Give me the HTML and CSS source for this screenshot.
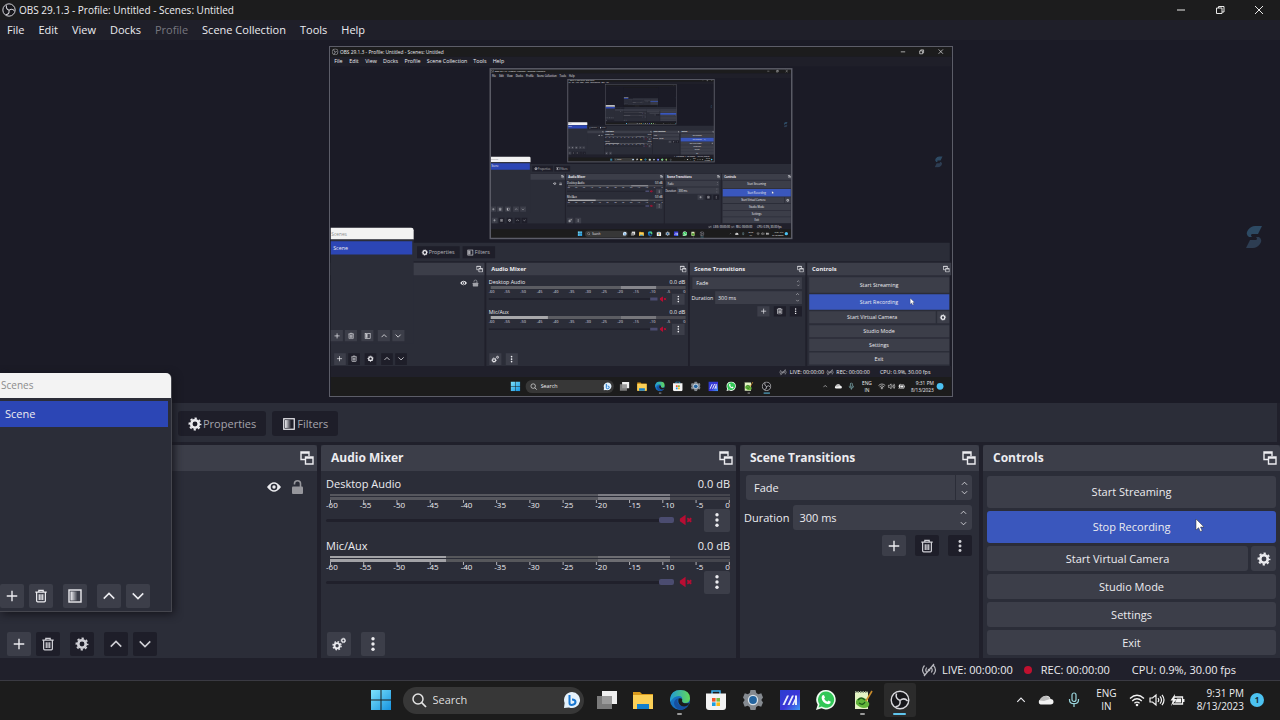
FILE: index.html
```html
<!DOCTYPE html>
<html lang="en">

<head>
    <meta charset="UTF-8">
    <meta name="viewport" content="width=device-width, initial-scale=1.0">
    <title>OBS 29.1.3 - Profile: Untitled - Scenes: Untitled</title>
    <link rel="stylesheet" href="styles.css">
</head>

<body>
    <!-- icons -->
    <svg class="sprite" aria-hidden="true">
        <defs>
            <linearGradient id="winBlue" x1="0" y1="0" x2="1" y2="1">
                <stop offset="0" stop-color="#7fe3fb" />
                <stop offset="1" stop-color="#1592e0" />
            </linearGradient>
            <linearGradient id="edgeGreen" x1="0" y1="0" x2="1" y2="0">
                <stop offset="0" stop-color="#1f9ad8" />
                <stop offset="1" stop-color="#63d958" />
            </linearGradient>
            <linearGradient id="asus" x1="0" y1="0" x2="1" y2="1">
                <stop offset="0" stop-color="#2a3fd0" />
                <stop offset=".55" stop-color="#3c35d8" />
                <stop offset="1" stop-color="#3d9af5" />
            </linearGradient>
            <linearGradient id="fade" x1="0" y1="0" x2="1" y2="0">
                <stop offset="0" stop-color="#f4f4f8" />
                <stop offset="1" stop-color="#f4f4f8" stop-opacity="0" />
            </linearGradient>
        </defs>
        <symbol id="plus" viewBox="0 0 16 16">
            <path d="M8 2v12M2 8h12" fill="none" stroke="currentColor" stroke-width="1.6" />
        </symbol>
        <symbol id="trash" viewBox="0 0 16 16">
            <path d="M1.5 3.5h13M5.5 3V1.500h5V3M3 4v9.500q0 1.200 1.200 1.200h7.600q1.200 0 1.200-1.200V4M6 6v6.500M8 6v6.500M10 6v6.500" fill="none" stroke="currentColor" stroke-width="1.4" />
        </symbol>
        <symbol id="gear" viewBox="0 0 16 16">
            <circle cx="8" cy="8" r="4.3" fill="none" stroke="currentColor" stroke-width="3" />
            <circle cx="8" cy="8" r="6.4" fill="none" stroke="currentColor" stroke-width="2" stroke-dasharray="2.6 2.43" stroke-dashoffset="1.3" />
        </symbol>
        <symbol id="cogs" viewBox="0 0 16 16">
            <circle cx="5.8" cy="10" r="3" fill="none" stroke="currentColor" stroke-width="2.2" />
            <circle cx="5.8" cy="10" r="4.6" fill="none" stroke="currentColor" stroke-width="1.6" stroke-dasharray="1.8 1.81" />
            <circle cx="13" cy="4" r="1.9" fill="none" stroke="currentColor" stroke-width="1.5" />
            <circle cx="13" cy="4" r="2.7" fill="none" stroke="currentColor" stroke-width=".8" stroke-dasharray="1.2 .92" />
        </symbol>
        <symbol id="filter" viewBox="0 0 16 16">
            <rect x="2" y="2" width="12" height="12" fill="none" stroke="currentColor" stroke-width="1.4" />
            <rect x="3.5" y="3.5" width="7" height="9" fill="url(#fade)" />
        </symbol>
        <symbol id="up" viewBox="0 0 16 16">
            <path d="M2 11l6-6 6 6" fill="none" stroke="currentColor" stroke-width="1.8" />
        </symbol>
        <symbol id="down" viewBox="0 0 16 16">
            <path d="M2 5l6 6 6-6" fill="none" stroke="currentColor" stroke-width="1.8" />
        </symbol>
        <symbol id="dots" viewBox="0 0 16 16">
            <g fill="currentColor">
                <circle cx="8" cy="2.8" r="1.7" />
                <circle cx="8" cy="8" r="1.7" />
                <circle cx="8" cy="13.2" r="1.7" />
            </g>
        </symbol>
        <symbol id="popout" viewBox="0 0 14 14">
            <path d="M5 8.5H1V1h8v4M1 2h8" fill="none" stroke="currentColor" stroke-width="1.4" />
            <path d="M5.5 6h7.5v7H5.5zM5.5 7h7.5" fill="none" stroke="currentColor" stroke-width="1.4" />
        </symbol>
        <symbol id="eye" viewBox="0 0 16 16">
            <path d="M1 8q7-9.5 14 0q-7 9.5-14 0z" fill="currentColor" />
            <circle cx="8" cy="8" r="3.3" fill="#2b2d38" />
            <circle cx="8" cy="8" r="1.7" fill="currentColor" />
        </symbol>
        <symbol id="lock" viewBox="0 0 16 16">
            <rect x="3" y="7.5" width="11" height="7.5" rx="1" fill="currentColor" />
            <path d="M5.500 5.500v-1q0-2.800 3-2.800t3 2.800V8" fill="none" stroke="currentColor" stroke-width="1.6" />
        </symbol>
        <symbol id="mute" viewBox="0 0 16 12">
            <path d="M1 4.500L7.500 0v12L1 7.500z" fill="#b80d33" />
            <path d="M9.500 4l4.500 4M14 4L9.500 8" stroke="#b80d33" stroke-width="2" />
        </symbol>
        <symbol id="obs" viewBox="0 0 20 20">
            <circle cx="10" cy="10" r="8.8" fill="#17171b" stroke="#d8d8dc" stroke-width="1.4" />
            <g fill="none" stroke="#d8d8dc" stroke-width="1.5">
                <path d="M10 10.500Q5 8.500 6.500 3.500" />
                <path d="M10 10.500Q14.200 7 17.600 11" />
                <path d="M10 10.500Q11 16 5.500 16.800" />
            </g>
        </symbol>
        <symbol id="win" viewBox="0 0 20 20">
            <path d="M0 0h9.500v9.500H0zM10.500 0H20v9.500h-9.500zM0 10.500h9.500V20H0zM10.500 10.500H20V20h-9.500z" fill="url(#winBlue)" />
        </symbol>
        <symbol id="glass" viewBox="0 0 16 16">
            <circle cx="7" cy="7" r="5" fill="none" stroke="#e4e4e4" stroke-width="1.5" />
            <path d="M10.700 10.700L15 15" stroke="#e4e4e4" stroke-width="1.7" />
        </symbol>
        <symbol id="bing" viewBox="0 0 18 18">
            <path d="M9 1a8 8 0 1 1-3 15.400L1 17l.6-5A8 8 0 0 1 9 1z" fill="#e5f2fc" />
            <path d="M6.500 4v8q0 2 2.200 2q3.800-.4 3.800-3t-3.500-2.600" fill="none" stroke="#1877d2" stroke-width="2" />
        </symbol>
        <symbol id="taskview" viewBox="0 0 20 20">
            <path d="M5 1h15v13H5z" fill="#efefef" />
            <path d="M0 6h15v13H0z" fill="#8b8b8b" opacity=".85" />
        </symbol>
        <symbol id="folder" viewBox="0 0 20 20">
            <path d="M0 2h7l2 2h11v15H0z" fill="#d99a1c" />
            <path d="M0 5h20v14H0z" fill="#fbd057" />
            <path d="M4 14h12v5H4z" fill="#1380ce" />
        </symbol>
        <symbol id="edge" viewBox="0 0 20 20">
            <circle cx="10" cy="10" r="10" fill="#1673c3" />
            <path d="M0 9Q1 0 10.500 0T20 8.500Q19.500 13 15 13t-3-3Q13 6 8.500 6T0 12z" fill="url(#edgeGreen)" />
            <path d="M8 8.500q-2 6 3.500 7.500q4 1 7-1.500q-3 5.500-8.500 5.500Q4 18 4 13q.5-4 4-4.500z" fill="#1650a0" />
            <path d="M8.500 8.500q3-1 3.800 1q-1 3 2.200 3.700q3 .5 4.500-.7l-.5 2.500q-4 2.500-7.500.7T8.500 8.500z" fill="#1c1c1c" />
        </symbol>
        <symbol id="store" viewBox="0 0 20 20">
            <path d="M6 4V1h8v3" fill="none" stroke="#3ab0ee" stroke-width="1.5" />
            <path d="M0 3.500h20V17q0 3-3 3H3q-3 0-3-3z" fill="#f3f3f3" />
            <path d="M6 8h3.600v3.600H6z" fill="#f05325" />
            <path d="M10.400 8H14v3.600h-3.600z" fill="#7ab93e" />
            <path d="M6 12.400h3.600V16H6z" fill="#1d9de0" />
            <path d="M10.400 12.400H14V16h-3.600z" fill="#fcb913" />
        </symbol>
        <symbol id="settings" viewBox="0 0 20 20">
            <path d="M7.500 0h5l.8 3 2 1.200 3-.9L20 7.500 18.300 10l1.700 2.500-1.800 4.200-3-.9-2 1.200-.7 3h-5l-.8-3-2-1.200-3 .9L0 12.500 1.700 10 0 7.500l1.800-4.200 3 .9 2-1.200z" fill="#858a90" />
            <circle cx="10" cy="10" r="5.2" fill="#d9e2ea" />
            <circle cx="10" cy="10" r="3.9" fill="#23649f" />
        </symbol>
        <symbol id="myasus" viewBox="0 0 20 20">
            <path d="M0 0h20v20H0z" fill="url(#asus)" />
            <path d="M2.500 15L7 5.500h2L4.500 15zM7.500 15L12 5.500h2L9.500 15zM12 15l3-6.500V5.500h2V15h-2v-3l-1.200 3z" fill="#e9eefc" />
        </symbol>
        <symbol id="whatsapp" viewBox="0 0 20 20">
            <path d="M10.200 0a9.700 9.700 0 1 1-4.700 18.300L0 20l1.700-5.200A9.700 9.700 0 0 1 10.200 0z" fill="#eefbf0" />
            <path d="M10.200 1.600a8.100 8.100 0 1 1-4.400 15L2.500 17.500l1-3.200A8.100 8.100 0 0 1 10.200 1.600z" fill="#32c757" />
            <path d="M6.300 5.500q1.300-1.200 2 .3l.7 1.700-.9 1.300q1 2 3.200 2.900l1.200-1.200 2.300 1.200q0 2.300-2.600 2.600Q6 13 5.600 8q0-1.500.7-2.500z" fill="#fff" />
        </symbol>
        <symbol id="notepad" viewBox="0 0 20 20">
            <path d="M2 2h13v17H2z" fill="#e4f3c4" />
            <path d="M2 2h13" stroke="#8d9a80" stroke-width="2" stroke-dasharray="1.5 1" />
            <path d="M3 14q-1-6 5-6t6 3q4 2 1 6-6 3-12-3z" fill="#62b53a" />
            <path d="M5 10q3-4 7 0M6 13q4 3 6-1" fill="none" stroke="#1e5b1b" stroke-width="1.3" />
            <path d="M19 1l-6 10" stroke="#c98b2b" stroke-width="1.6" />
        </symbol>
        <symbol id="cloud" viewBox="0 0 16 12">
            <path d="M4 10.500q-3.200 0-3.200-2.600T3.500 5.300Q5 1.500 8.500 1.800T12.500 5q3 .2 3 2.800t-3 2.700z" fill="#f2f2f2" />
            <path d="M1.500 6.500Q3.300 1.500 8 2q3 .5 4 3L6 7z" fill="#bdbdbd" />
        </symbol>
        <symbol id="mic" viewBox="0 0 12 16">
            <rect x="4" y="1" width="4" height="8.5" rx="2" fill="none" stroke="#9ad5dc" stroke-width="1.2" />
            <path d="M1.500 7v1q0 3.700 4.500 3.700T10.500 8V7M6 11.700V15" fill="none" stroke="#9ad5dc" stroke-width="1.2" />
        </symbol>
        <symbol id="wifi" viewBox="0 0 16 14">
            <path d="M1 5.500q7-6.500 14 0M3.200 8q4.800-4.400 9.600 0M5.400 10.300q2.600-2.300 5.200 0" fill="none" stroke="#f2f2f2" stroke-width="1.3" />
            <circle cx="8" cy="12" r="1.3" fill="#f2f2f2" />
        </symbol>
        <symbol id="volume" viewBox="0 0 16 14">
            <path d="M1 5h2.500L7 2v10L3.500 9H1zM9 5q1.500 2 0 4M11 3.300q3 3.700 0 7.400M13 1.800q4 5.200 0 10.400" fill="none" stroke="#f2f2f2" stroke-width="1.2" />
        </symbol>
        <symbol id="battery" viewBox="0 0 16 14">
            <path d="M5 4h8.500v7H4M14.800 6v3" fill="none" stroke="#f2f2f2" stroke-width="1.3" />
            <path d="M8 5.500h4v4H6z" fill="#f2f2f2" />
            <path d="M6 1L1.500 7.500h2.300L2 13l6-7H5.500z" fill="#f2f2f2" />
        </symbol>
        <symbol id="live" viewBox="0 0 16 14">
            <path d="M3.500 2.500q-4 4.500 0 9M5.800 4.500q-2 2.500 0 5M12.500 2.500q4 4.500 0 9M10.200 4.500q2 2.500 0 5M3 13L13 1" fill="none" stroke="#b9b9bf" stroke-width="1.2" />
            <circle cx="8" cy="7" r="1.3" fill="#b9b9bf" />
        </symbol>
        <symbol id="swirl" viewBox="0 0 20 24">
            <path d="M18 1l-4 8H8q-2 1 0 3H5Q1 9 4 5q3-4 7-4z" fill="#2d4a63" />
            <path d="M2 23l4-8h6q2-1 0-3h3q4 3 1 7-3 4-7 4z" fill="#2d3d52" />
        </symbol>
        <symbol id="cursor" viewBox="0 0 10 14">
            <path d="M1 1v11l2.600-2.300L5.300 13.500l1.900-.8-1.700-3.700H9z" fill="#fff" stroke="#333" stroke-width=".5" />
        </symbol>
    </svg>

    <header class="titlebar">
        <svg class="icon-14"><use href="#obs" /></svg>
        <span class="title">OBS 29.1.3 - Profile: Untitled - Scenes: Untitled</span>
        <div class="window-buttons">
            <button type="button" aria-label="Minimize"><svg viewBox="0 0 10 10"><path d="M1 5h8" /></svg></button>
            <button type="button" aria-label="Restore"><svg viewBox="0 0 10 10"><path d="M1.500 3h5.500v5.500H1.500zM3.500 3V1.500h5.500V7H7" /></svg></button>
            <button type="button" aria-label="Close"><svg viewBox="0 0 10 10"><path d="M1 1l8 8M9 1L1 9" /></svg></button>
        </div>
    </header>

    <nav class="menubar">
        <button type="button">File</button>
        <button type="button">Edit</button>
        <button type="button">View</button>
        <button type="button">Docks</button>
        <button type="button" disabled>Profile</button>
        <button type="button">Scene Collection</button>
        <button type="button">Tools</button>
        <button type="button">Help</button>
    </nav>

    <main class="canvas">
        <svg class="preview" viewBox="0 0 1280 720">
            <!-- the captured desktop, repeated inside itself below -->
            <g id="desktop">
                <path d="M0 0h1280v720H0z" fill="#1b1b26" />
                <path d="M0 0h1280v20H0z" fill="#1c1c1d" />
                <path d="M0 20h1280v20H0z" fill="#1f1f29" />
                <use href="#obs" x="2" y="3" width="14" height="14" />
                <g class="cap-text">
                    <text x="19" y="14" class="cap-small">OBS 29.1.3 - Profile: Untitled - Scenes: Untitled</text>
                    <text x="7" y="34">File</text>
                    <text x="38" y="34">Edit</text>
                    <text x="71" y="34">View</text>
                    <text x="108" y="34">Docks</text>
                    <text x="152" y="34">Profile</text>
                    <text x="198" y="34">Scene Collection</text>
                    <text x="294" y="34">Tools</text>
                    <text x="334" y="34">Help</text>
                </g>
                <path d="M1176 10h9M1215 8h6v6h-6zM1217 8v-2h6v6h-2M1254 5l9 9M1263 5l-9 9" fill="none" stroke="#ddd" stroke-width="1.5" />
                <use href="#swirl" x="1244" y="225" width="20" height="24" />
                <path d="M0 404h1277v254H0z" fill="#2b2d38" />
                <path d="M0 442h1280v3H0zM317 445h4v213h-4zM737 445h4v213h-4zM979 445h4v213h-4z" fill="#20202b" />
                <path d="M0 658h1280v23H0z" fill="#20202b" />
                <path d="M0 681h1280v39H0z" fill="#1c1c1c" />
                <path d="M0 445h317v26H0zM321 445h416v26H321zM741 445h238v26H741zM983 445h297v26H983z" fill="#3c3e49" />
                <path d="M178 411h88v25h-88zM272 411h67v25h-67z" fill="#1e1e29" />
                <g color="#f0f0f4">
                    <use href="#gear" x="187" y="417" width="14" height="14" />
                    <use href="#filter" x="281" y="417" width="14" height="14" />
                    <use href="#popout" x="300" y="451" width="14" height="14" />
                    <use href="#popout" x="720" y="451" width="14" height="14" />
                    <use href="#popout" x="962" y="451" width="14" height="14" />
                    <use href="#popout" x="1263" y="451" width="14" height="14" />
                    <use href="#eye" x="266" y="479" width="16" height="16" />
                    <use href="#lock" x="290" y="479" width="16" height="16" opacity=".6" />
                </g>
                <path d="M987 475h289v32H987zM987 545h261v25H987zM1251 545h25v25h-25zM987 574h289v25H987zM987 602h289v25H987zM987 630h289v25H987zM746 475h226v24H746zM793 504h179v26H793zM880 535h25v21h-25zM704 509h26v23h-26zM704 571h26v23h-26zM327 632h25v24h-25zM361 632h25v24h-25zM7 632h24v24H7z" fill="#3c3e49" />
                <path d="M987 510h289v32H987z" fill="#3a57bd" />
                <path d="M914 535h25v21h-25zM947 535h25v21h-25zM36 632h24v24H36zM70 632h24v24H70zM104 632h24v24h-24zM133 632h24v24h-24z" fill="#1e1e29" />
                <g class="cap-text">
                    <text x="202" y="428" opacity=".7">Properties</text>
                    <text x="297" y="428" opacity=".7">Filters</text>
                    <text x="331" y="463" class="cap-bold">Audio Mixer</text>
                    <text x="750" y="463" class="cap-bold">Scene Transitions</text>
                    <text x="993" y="463" class="cap-bold">Controls</text>
                    <text x="326" y="488">Desktop Audio</text>
                    <text x="699" y="488">0.0 dB</text>
                    <text x="326" y="550">Mic/Aux</text>
                    <text x="699" y="550">0.0 dB</text>
                    <text x="754" y="492">Fade</text>
                    <text x="744" y="522">Duration</text>
                    <text x="799" y="521">300 ms</text>
                    <text x="947" y="675">LIVE: 00:00:00</text>
                    <text x="1043" y="675">REC: 00:00:00</text>
                    <text x="1133" y="675">CPU: 0.9%, 30.00 fps</text>
                </g>
                <g class="cap-text cap-mid">
                    <text x="1131" y="495">Start Streaming</text>
                    <text x="1131" y="530">Start Recording</text>
                    <text x="1117" y="562">Start Virtual Camera</text>
                    <text x="1131" y="590">Studio Mode</text>
                    <text x="1131" y="619">Settings</text>
                    <text x="1131" y="647">Exit</text>
                </g>
                <path d="M330 493h268v6H330zM448 555h150v6H448z" fill="#5b5c62" />
                <path d="M598 493h74v6h-74z" fill="#86868c" />
                <path d="M598 555h74v6h-74z" fill="#77777c" />
                <path d="M330 555h118v6H330z" fill="#a8a8ab" />
                <path d="M672 493h60v6h-60zM672 555h60v6h-60z" fill="#48484f" />
                <g class="cap-scale">
                    <text x="326" y="508">-60</text><text x="358" y="508">-55</text><text x="391" y="508">-50</text><text x="425" y="508">-45</text><text x="458" y="508">-40</text><text x="491" y="508">-35</text><text x="525" y="508">-30</text><text x="558" y="508">-25</text><text x="591" y="508">-20</text><text x="624" y="508">-15</text><text x="658" y="508">-10</text><text x="693" y="508">-5</text><text x="727" y="508">0</text>
                    <text x="326" y="570">-60</text><text x="358" y="570">-55</text><text x="391" y="570">-50</text><text x="425" y="570">-45</text><text x="458" y="570">-40</text><text x="491" y="570">-35</text><text x="525" y="570">-30</text><text x="558" y="570">-25</text><text x="591" y="570">-20</text><text x="624" y="570">-15</text><text x="658" y="570">-10</text><text x="693" y="570">-5</text><text x="727" y="570">0</text>
                </g>
                <path d="M326 520h333M326 582h333" stroke="#1e1e29" stroke-width="3" />
                <path d="M659 517h15v6h-15zM659 579h15v6h-15z" fill="#4b4c70" />
                <use href="#mute" x="678" y="514" width="16" height="12" />
                <use href="#mute" x="678" y="576" width="16" height="12" />
                <g color="#f0f0f4">
                    <use href="#dots" x="709" y="512" width="16" height="16" />
                    <use href="#dots" x="709" y="574" width="16" height="16" />
                    <use href="#dots" x="365" y="636" width="16" height="16" />
                    <use href="#cogs" x="331" y="636" width="16" height="16" />
                    <use href="#plus" x="886" y="538" width="14" height="14" />
                    <use href="#trash" x="919" y="538" width="14" height="14" />
                    <use href="#dots" x="952" y="538" width="14" height="14" />
                    <use href="#up" x="959" y="506" width="8" height="8" />
                    <use href="#down" x="959" y="519" width="8" height="8" />
                    <use href="#up" x="961" y="480" width="7" height="7" />
                    <use href="#down" x="961" y="488" width="7" height="7" />
                    <use href="#gear" x="1256" y="551" width="14" height="14" />
                    <use href="#plus" x="11" y="636" width="14" height="14" />
                    <use href="#trash" x="41" y="636" width="14" height="14" />
                    <use href="#gear" x="75" y="636" width="14" height="14" />
                    <use href="#up" x="109" y="636" width="14" height="14" />
                    <use href="#down" x="138" y="636" width="14" height="14" />
                </g>
                <use href="#cursor" x="1194" y="517" width="12" height="16" />
                <use href="#live" x="925" y="664" width="16" height="14" />
                <use href="#live" x="1022" y="664" width="16" height="14" />
                <path d="M0 373h166q5 0 5 5v19H0z" fill="#f3f3f3" />
                <path d="M0 397h171v215H0z" fill="#2b2d38" />
                <path d="M0 401h168v27H0z" fill="#2c46b5" />
                <path d="M0 584h25v23H0zM29 584h25v23H29zM63 584h25v23H63zM97 584h25v23H97zM127 584h25v23h-25z" fill="#3c3e49" />
                <g class="cap-text">
                    <text x="1" y="389" opacity=".5" class="cap-small cap-dark">Scenes</text>
                    <text x="5" y="418">Scene</text>
                </g>
                <g color="#f0f0f4">
                    <use href="#plus" x="6" y="589" width="14" height="14" />
                    <use href="#trash" x="35" y="589" width="14" height="14" />
                    <use href="#filter" x="69" y="589" width="14" height="14" />
                    <use href="#up" x="103" y="589" width="14" height="14" />
                    <use href="#down" x="132" y="589" width="14" height="14" />
                </g>
                <rect x="402" y="687" width="182" height="27" rx="13" fill="#373737" />
                <use href="#win" x="371" y="690" width="20" height="20" />
                <use href="#glass" x="411" y="693" width="15" height="15" />
                <use href="#bing" x="562" y="691" width="18" height="18" />
                <use href="#taskview" x="596" y="690" width="20" height="20" />
                <use href="#folder" x="632" y="690" width="20" height="20" />
                <use href="#edge" x="669" y="690" width="20" height="20" />
                <use href="#store" x="706" y="690" width="20" height="20" />
                <use href="#settings" x="743" y="690" width="20" height="20" />
                <use href="#myasus" x="779" y="690" width="20" height="20" />
                <use href="#whatsapp" x="816" y="690" width="20" height="20" />
                <use href="#notepad" x="852" y="690" width="20" height="20" />
                <use href="#obs" x="889" y="690" width="20" height="20" />
                <path d="M677 714h5M860 714h5" stroke="#999" stroke-width="2" />
                <path d="M893 714h13" stroke="#60c6ee" stroke-width="2" />
                <g color="#f0f0f4"><use href="#up" x="1015" y="695" width="10" height="10" /></g>
                <use href="#cloud" x="1039" y="694" width="16" height="12" />
                <use href="#mic" x="1068" y="692" width="12" height="16" />
                <use href="#wifi" x="1129" y="693" width="16" height="14" />
                <use href="#volume" x="1149" y="693" width="16" height="14" />
                <use href="#battery" x="1169" y="693" width="16" height="14" />
                <circle cx="1257" cy="700" r="7" fill="#4cc2f1" />
                <g class="cap-text">
                    <text x="433" y="704">Search</text>
                    <g class="cap-small">
                        <text x="1096" y="697">ENG</text>
                        <text x="1101" y="711">IN</text>
                        <text x="1207" y="697">9:31 PM</text>
                        <text x="1197" y="711">8/13/2023</text>
                    </g>
                </g>
            </g>
            <svg x="329" y="45" width="622" height="350" viewBox="0 0 1280 720">
                <use href="#desktop" />
                <svg x="329" y="45" width="622" height="350" viewBox="0 0 1280 720">
                    <use href="#desktop" />
                    <svg x="329" y="45" width="622" height="350" viewBox="0 0 1280 720">
                        <use href="#desktop" />
                        <svg x="329" y="45" width="622" height="350" viewBox="0 0 1280 720">
                            <use href="#desktop" />
                        </svg>
                    </svg>
                    <rect class="edge" x="329" y="45" width="622" height="350" stroke-width="4" />
                </svg>
                <rect class="edge" x="329" y="45" width="622" height="350" stroke-width="4" />
            </svg>
            <rect class="edge" x="329" y="45" width="622" height="350" stroke-width="3" />
        </svg>
        <svg class="swirl"><use href="#swirl" /></svg>
    </main>

    <div class="source-bar">
        <button type="button" class="dark"><svg class="icon-14"><use href="#gear" /></svg>Properties</button>
        <button type="button" class="dark"><svg class="icon-14"><use href="#filter" /></svg>Filters</button>
    </div>

    <div class="docks">
        <section class="dock">
            <h2><span></span><svg class="icon-14"><use href="#popout" /></svg></h2>
            <div class="source-row">
                <button type="button" aria-label="Visible"><svg class="icon-16"><use href="#eye" /></svg></button>
                <button type="button" aria-label="Lock" class="faded"><svg class="icon-16"><use href="#lock" /></svg></button>
            </div>
            <div class="tools source-tools">
                <button type="button" aria-label="Add source"><svg class="icon-14"><use href="#plus" /></svg></button>
                <button type="button" class="dark" aria-label="Remove source"><svg class="icon-14"><use href="#trash" /></svg></button>
                <button type="button" class="dark split" aria-label="Source properties"><svg class="icon-14"><use href="#gear" /></svg></button>
                <button type="button" class="dark split" aria-label="Move up"><svg class="icon-14"><use href="#up" /></svg></button>
                <button type="button" class="dark" aria-label="Move down"><svg class="icon-14"><use href="#down" /></svg></button>
            </div>
        </section>

        <section class="dock">
            <h2><span>Audio Mixer</span><svg class="icon-14"><use href="#popout" /></svg></h2>
            <div class="mixer">
                <div class="channel">
                    <div class="channel-name"><label for="desktop-vol">Desktop Audio</label><span>0.0 dB</span></div>
                    <div class="meter meter-desktop"></div>
                    <div class="scale"><span>-60</span><span>-55</span><span>-50</span><span>-45</span><span>-40</span><span>-35</span><span>-30</span><span>-25</span><span>-20</span><span>-15</span><span>-10</span><span>-5</span><span>0</span></div>
                    <div class="channel-row">
                        <input type="range" id="desktop-vol" min="0" max="100" value="100">
                        <button type="button" class="mute" aria-label="Mute"><svg><use href="#mute" /></svg></button>
                        <button type="button" aria-label="Desktop Audio options"><svg class="icon-16"><use href="#dots" /></svg></button>
                    </div>
                </div>
                <div class="channel">
                    <div class="channel-name"><label for="mic-vol">Mic/Aux</label><span>0.0 dB</span></div>
                    <div class="meter meter-mic"></div>
                    <div class="scale"><span>-60</span><span>-55</span><span>-50</span><span>-45</span><span>-40</span><span>-35</span><span>-30</span><span>-25</span><span>-20</span><span>-15</span><span>-10</span><span>-5</span><span>0</span></div>
                    <div class="channel-row">
                        <input type="range" id="mic-vol" min="0" max="100" value="100">
                        <button type="button" class="mute" aria-label="Mute"><svg><use href="#mute" /></svg></button>
                        <button type="button" aria-label="Mic/Aux options"><svg class="icon-16"><use href="#dots" /></svg></button>
                    </div>
                </div>
            </div>
            <div class="tools mixer-tools">
                <button type="button" aria-label="Audio settings"><svg class="icon-14"><use href="#cogs" /></svg></button>
                <button type="button" aria-label="Mixer menu"><svg class="icon-16"><use href="#dots" /></svg></button>
            </div>
        </section>

        <section class="dock">
            <h2><span>Scene Transitions</span><svg class="icon-14"><use href="#popout" /></svg></h2>
            <div class="transitions">
                <div class="field">
                    <select aria-label="Transition">
                        <option>Fade</option>
                    </select>
                    <span class="arrows divided"><svg><use href="#up" /></svg><svg><use href="#down" /></svg></span>
                </div>
                <div class="duration">
                    <label for="duration">Duration</label>
                    <div class="field">
                        <input type="text" id="duration" value="300 ms">
                        <span class="arrows wide"><svg><use href="#up" /></svg><svg><use href="#down" /></svg></span>
                    </div>
                </div>
                <div class="tools transition-tools">
                    <button type="button" aria-label="Add transition"><svg class="icon-14"><use href="#plus" /></svg></button>
                    <button type="button" class="dark" aria-label="Remove transition"><svg class="icon-14"><use href="#trash" /></svg></button>
                    <button type="button" class="dark" aria-label="Transition menu"><svg class="icon-14"><use href="#dots" /></svg></button>
                </div>
            </div>
        </section>

        <section class="dock">
            <h2><span>Controls</span><svg class="icon-14"><use href="#popout" /></svg></h2>
            <div class="controls">
                <button type="button" class="tall">Start Streaming</button>
                <button type="button" class="tall recording">Stop Recording<svg class="cursor"><use href="#cursor" /></svg></button>
                <div class="camera">
                    <button type="button">Start Virtual Camera</button>
                    <button type="button" aria-label="Virtual camera settings"><svg class="icon-14"><use href="#gear" /></svg></button>
                </div>
                <button type="button">Studio Mode</button>
                <button type="button">Settings</button>
                <button type="button">Exit</button>
            </div>
        </section>
    </div>

    <div class="statusbar">
        <svg class="live"><use href="#live" /></svg>
        <span>LIVE: 00:00:00</span>
        <i class="rec-dot"></i>
        <span>REC: 00:00:00</span>
        <span class="cpu">CPU: 0.9%, 30.00 fps</span>
    </div>

    <footer class="taskbar">
        <div class="task-center">
            <button type="button" aria-label="Start"><svg class="icon-20"><use href="#win" /></svg></button>
            <div class="search">
                <svg class="icon-16"><use href="#glass" /></svg>
                <input type="text" aria-label="Search" placeholder="Search">
                <svg class="icon-18"><use href="#bing" /></svg>
            </div>
            <div class="apps">
                <button type="button" aria-label="Task view"><svg class="icon-20"><use href="#taskview" /></svg></button>
                <button type="button" aria-label="Explorer"><svg class="icon-20"><use href="#folder" /></svg></button>
                <button type="button" aria-label="Edge" class="open"><svg class="icon-20"><use href="#edge" /></svg></button>
                <button type="button" aria-label="Store"><svg class="icon-20"><use href="#store" /></svg></button>
                <button type="button" aria-label="Settings"><svg class="icon-20"><use href="#settings" /></svg></button>
                <button type="button" aria-label="MyASUS"><svg class="icon-20"><use href="#myasus" /></svg></button>
                <button type="button" aria-label="WhatsApp"><svg class="icon-20"><use href="#whatsapp" /></svg></button>
                <button type="button" aria-label="Notepad++" class="open"><svg class="icon-20"><use href="#notepad" /></svg></button>
                <button type="button" aria-label="OBS Studio" class="open active"><svg class="icon-20"><use href="#obs" /></svg></button>
            </div>
        </div>
        <div class="tray">
            <svg class="icon-10"><use href="#up" /></svg>
            <svg class="icon-16"><use href="#cloud" /></svg>
            <svg class="icon-16"><use href="#mic" /></svg>
            <span class="lang">ENG<br>IN</span>
            <div class="net">
                <svg class="icon-16"><use href="#wifi" /></svg>
                <svg class="icon-16"><use href="#volume" /></svg>
                <svg class="icon-16"><use href="#battery" /></svg>
            </div>
            <div class="clock">
                <span>9:31 PM<br>8/13/2023</span>
                <b>1</b>
            </div>
        </div>
    </footer>

    <!-- undocked scenes window -->
    <aside class="scenes">
        <header>Scenes</header>
        <ul>
            <li>Scene</li>
        </ul>
        <div class="tools">
            <button type="button" aria-label="Add scene"><svg class="icon-14"><use href="#plus" /></svg></button>
            <button type="button" aria-label="Remove scene"><svg class="icon-14"><use href="#trash" /></svg></button>
            <button type="button" class="split" aria-label="Scene filters"><svg class="icon-16"><use href="#filter" /></svg></button>
            <button type="button" class="split" aria-label="Move scene up"><svg class="icon-14"><use href="#up" /></svg></button>
            <button type="button" aria-label="Move scene down"><svg class="icon-14"><use href="#down" /></svg></button>
        </div>
    </aside>
</body>

</html>
```

FILE: styles.css
```css
* {
    box-sizing: border-box;
}

body {
    margin: 0;
    min-height: 100vh;
    display: flex;
    flex-direction: column;
    position: relative;
    background: #20202b;
    color: #ececf0;
    font-family: "Open Sans", "Noto Sans", sans-serif;
    font-size: 11px;
    line-height: 16px;
    overflow-x: hidden;
}

button,
input,
select {
    font: inherit;
    color: inherit;
    margin: 0;
    padding: 0;
    border: 0;
    background: none;
}

button {
    display: flex;
    align-items: center;
    justify-content: center;
}

svg {
    display: block;
    flex: none;
}

.sprite {
    position: absolute;
    width: 0;
    height: 0;
}

.icon-10 {
    width: 10px;
    height: 10px;
}

.icon-14 {
    width: 14px;
    height: 14px;
}

.icon-16 {
    width: 16px;
    height: 16px;
}

.icon-18 {
    width: 18px;
    height: 18px;
}

.icon-20 {
    width: 20px;
    height: 20px;
}

/* title and menu */
.titlebar {
    display: flex;
    align-items: center;
    gap: 3px;
    height: 20px;
    padding: 0 2px;
    background: #1c1c1d;
    font-size: 10px;
}

.title {
    flex: 1;
}

.window-buttons {
    display: flex;
}

.window-buttons button {
    width: 39px;
    height: 20px;
}

.window-buttons svg {
    width: 10px;
    height: 10px;
    fill: none;
    stroke: #e8e8e8;
}

.menubar {
    display: flex;
    gap: 14px;
    height: 20px;
    padding: 0 7px;
    background: #1f1f29;
}

.menubar button:disabled {
    color: #77777f;
}

/* preview */
.canvas {
    flex: 1;
    display: flex;
    justify-content: center;
    align-items: center;
    position: relative;
    padding: 4px 0 4px 2px;
    background: #1b1b26;
}

.preview {
    width: 49%;
    max-width: 624px;
    aspect-ratio: 16 / 9;
    border: 1px solid #5c5d68;
}

.edge {
    fill: none;
    stroke: #5c5d68;
}

.swirl {
    position: absolute;
    right: 16px;
    top: 185px;
    width: 20px;
    height: 24px;
}

.cap-text {
    font-size: 11px;
    fill: #ececf0;
}

.cap-small {
    font-size: 10px;
}

.cap-bold {
    font-size: 12px;
    font-weight: 700;
}

.cap-mid {
    text-anchor: middle;
}

.cap-dark {
    fill: #222;
}

.cap-scale {
    font-size: 8px;
    fill: #dcdce0;
}

/* source toolbar */
.source-bar {
    display: flex;
    gap: 6px;
    margin-right: 3px;
    padding: 8px 0 6px 178px;
    background: #2b2d38;
}

.source-bar button {
    height: 25px;
    padding: 0 10px;
    gap: 1px;
    border-radius: 3px;
    color: #a5a5ad;
}

.source-bar svg {
    color: #ececf0;
}

.dark {
    background: #1e1e29;
}

/* docks */
.docks {
    display: grid;
    grid-template-columns: 317fr 415fr 239fr 297fr;
    gap: 4px;
    margin: 3px 0 2px;
}

.dock {
    display: flex;
    flex-direction: column;
    min-width: 0;
    min-height: 213px;
    background: #2b2d38;
}

.dock h2 {
    display: flex;
    align-items: center;
    justify-content: space-between;
    height: 26px;
    margin: 0;
    padding: 0 3px 0 10px;
    background: #3c3e49;
    border-radius: 3px 3px 0 0;
    font-size: 12px;
}

.tools {
    display: flex;
    gap: 5px;
}

.tools button {
    width: 24px;
    height: 24px;
    border-radius: 2px;
    background: #3c3e49;
}

.tools .dark {
    background: #1e1e29;
    color: #d0d0d6;
}

.tools .split {
    margin-left: 5px;
}

.source-row {
    display: flex;
    justify-content: flex-end;
    gap: 7px;
    padding: 8px 12px 0 0;
}

.faded {
    color: #96969c;
}

.source-tools {
    margin-top: auto;
    padding: 0 0 2px 7px;
}

.mixer {
    display: flex;
    flex-direction: column;
    gap: 6px;
    padding: 5px 6px 0 5px;
}

.channel-name {
    display: flex;
    justify-content: space-between;
}

.meter {
    height: 7px;
    margin: 1px 0 0 4px;
    border-top: 1px solid #2b2d38;
}

/* splits the meter into its two channels */
.meter::before {
    content: "";
    display: block;
    height: 1px;
    margin-top: 2px;
    border-top: 1px solid #2b2d38;
}

.meter-desktop {
    background: linear-gradient(to right, #56575e 67%, #7c7c83 67% 85%, #45464e 85%);
}

.meter-mic {
    background: linear-gradient(to right, #a2a2a6 29%, #56575b 29% 67%, #6d6d72 67% 85%, #45464e 85%);
}

.scale {
    display: flex;
    justify-content: space-between;
    height: 8px;
    background: linear-gradient(to right, #b4b4ba 1px, transparent 1px) 4px 0 / calc((100% - 5px) / 12) 3px repeat-x;
    font-size: 8px;
    line-height: 9px;
}

.channel-row {
    display: flex;
    align-items: center;
    height: 24px;
}

.channel-row button {
    width: 26px;
    height: 23px;
    border-radius: 2px;
    background: #3c3e49;
}

.channel-row .mute {
    width: 16px;
    margin: 0 10px 0 4px;
    background: none;
}

.mute svg {
    width: 14px;
    height: 12px;
}

input[type="range"] {
    flex: 1;
    min-width: 0;
    height: 8px;
    appearance: none;
}

input[type="range"]::-webkit-slider-runnable-track {
    height: 3px;
    border-radius: 2px;
    background: #20202b;
}

input[type="range"]::-webkit-slider-thumb {
    appearance: none;
    width: 15px;
    height: 6px;
    margin-top: -2px;
    border-radius: 2px;
    background: #4b4c70;
}

.mixer-tools {
    gap: 10px;
    margin-top: auto;
    padding: 0 0 2px 6px;
}

.transitions {
    display: flex;
    flex-direction: column;
    gap: 5px;
    padding: 4px 7px 4px 6px;
}

.field {
    display: grid;
    flex: 1;
    min-width: 0;
    grid-template-columns: 1fr 17px;
    border-radius: 3px;
    background: #3c3e49;
}

.field select,
.field input {
    grid-area: 1 / 1 / 2 / 3;
    width: 100%;
    height: 25px;
    padding: 0 8px;
    appearance: none;
}

.field input {
    padding: 0 6px;
}

.arrows {
    grid-area: 1 / 2;
    display: flex;
    flex-direction: column;
    align-items: center;
    justify-content: center;
    gap: 2px;
    pointer-events: none;
}

.divided {
    border-left: 1px solid #2b2d38;
}

.wide {
    gap: 4px;
}

.arrows svg {
    width: 7px;
    height: 7px;
}

.duration {
    display: flex;
    align-items: center;
    gap: 4px;
    margin-left: -2px;
}

.transition-tools {
    justify-content: flex-end;
    gap: 9px;
}

.transition-tools button {
    height: 21px;
}

.controls {
    display: flex;
    flex-direction: column;
    gap: 3px;
    padding: 5px 4px 0;
}

.controls button {
    height: 25px;
    border-radius: 3px;
    background: #3c3e49;
}

.controls .tall {
    height: 32px;
}

.controls .recording {
    position: relative;
    background: #3a57bd;
}

.cursor {
    position: absolute;
    left: 72%;
    top: 7px;
    width: 10px;
    height: 14px;
}

.camera {
    display: grid;
    grid-template-columns: 1fr 25px;
    gap: 3px;
}

/* status */
.statusbar {
    display: flex;
    align-items: center;
    justify-content: flex-end;
    gap: 5px;
    height: 20px;
    padding-right: 44px;
}

.live {
    width: 16px;
    height: 14px;
}

.rec-dot {
    width: 8px;
    height: 8px;
    margin: 0 4px 0 6px;
    border-radius: 50%;
    background: #c0102f;
}

.cpu {
    margin-left: 17px;
}

/* taskbar */
.taskbar {
    display: grid;
    grid-template-columns: 1fr auto 1fr;
    height: 40px;
    padding-bottom: 1px;
    border-top: 1px solid #3a3a42;
    background: #1c1c1c;
}

.task-center {
    grid-column: 2;
    display: flex;
    align-items: center;
}

.task-center > button {
    width: 32px;
}

.search {
    display: flex;
    align-items: center;
    gap: 6px;
    width: 181px;
    height: 27px;
    margin: 0 7px 0 6px;
    padding: 0 3px 0 8px;
    border-radius: 14px;
    background: #373737;
}

.search input {
    flex: 1;
    min-width: 0;
}

.search input::placeholder {
    color: #dedede;
}

.apps {
    display: flex;
    justify-content: space-between;
    width: 325px;
}

.apps button {
    position: relative;
    width: 32px;
    height: 34px;
    border-radius: 3px;
}

.apps .active {
    background: #2b2b2b;
}

.open::after {
    content: "";
    position: absolute;
    bottom: 2px;
    width: 5px;
    height: 2px;
    border-radius: 1px;
    background: #9a9a9a;
}

.active::after {
    width: 13px;
    background: #60c6ee;
}

.tray {
    display: flex;
    align-items: center;
    justify-content: flex-end;
    gap: 12px;
    padding-right: 16px;
    font-size: 10px;
    line-height: 13px;
}

.lang {
    margin-left: 2px;
    text-align: center;
}

.net {
    display: flex;
    gap: 4px;
}

.clock {
    display: flex;
    align-items: center;
    gap: 6px;
    text-align: right;
}

.clock b {
    width: 14px;
    height: 14px;
    border-radius: 50%;
    background: #4cc2f1;
    color: #16303c;
    font-size: 8px;
    line-height: 14px;
    text-align: center;
}

/* floating window */
.scenes {
    position: absolute;
    left: 0;
    bottom: 108px;
    display: flex;
    flex-direction: column;
    width: 172px;
    height: 239px;
    border: solid #45464e;
    border-width: 0 1px 1px 0;
    border-radius: 0 6px 0 0;
    background: #2b2d38;
    box-shadow: 2px 2px 8px #15151c;
}

.scenes header {
    height: 25px;
    padding-left: 1px;
    border-radius: 0 5px 0 0;
    background: #f3f3f3;
    color: #8c8c8c;
    font-size: 10px;
    line-height: 24px;
}

.scenes ul {
    margin: 0;
    padding: 3px 3px 0 0;
    list-style: none;
}

.scenes li {
    padding: 5px;
    background: #2c46b5;
}

.scenes .tools {
    margin-top: auto;
    padding-bottom: 3px;
}
```
